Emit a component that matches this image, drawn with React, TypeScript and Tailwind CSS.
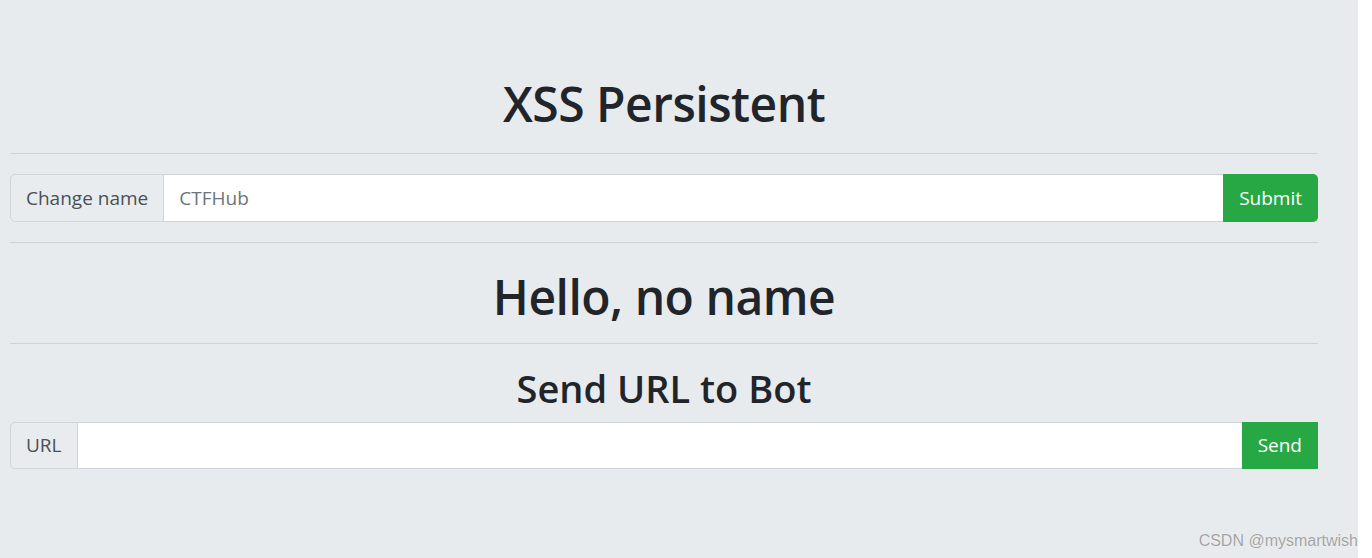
const font = { fontFamily: '"Open Sans", "Noto Sans", sans-serif' }

export default function App() {
  return (
    <div className="relative flex h-[558px] w-[1372px] bg-white" style={font}>
      <div className="h-full w-[1358px] bg-[#e8ebee]">
        <div className="ml-[10px] flex w-[1308px] flex-col text-[#212529]">
          <h1 className="mt-[72px] text-center text-[48px] font-semibold leading-[64px] tracking-[-0.5px]">
            XSS Persistent
          </h1>
          <hr className="mt-[17px] border-t border-black/10" />

          <div className="mt-[20px] flex h-[48px] text-[19px]">
            <span className="flex items-center rounded-l-[5px] border border-[#ced4da] bg-[#e9ecef] px-[15px] text-[#495057]">
              Change name
            </span>
            <input
              className="flex-1 border-y border-[#ced4da] bg-white px-[15px] text-[#495057] outline-none placeholder:text-[#6c757d]"
              placeholder="CTFHub"
            />
            <button className="rounded-r-[5px] bg-[#28a745] px-4 text-white">Submit</button>
          </div>

          <hr className="mt-[20px] border-t border-black/10" />
          <h1 className="mt-[22px] text-center text-[48px] font-semibold leading-[64px] tracking-[-0.5px]">
            Hello, no name
          </h1>
          <hr className="mt-[14px] border-t border-black/10" />
          <h2 className="mt-[22px] text-center text-[38px] font-semibold leading-[44px]">Send URL to Bot</h2>

          <div className="mt-[12px] flex h-[47px] text-[19px]">
            <span className="flex items-center rounded-l-[5px] border border-[#ced4da] bg-[#e9ecef] px-[15px] text-[#495057]">
              URL
            </span>
            <input className="flex-1 border-y border-[#ced4da] bg-white px-4 text-[#495057] outline-none" />
            <button className="bg-[#28a745] px-4 text-white">Send</button>
          </div>
        </div>
      </div>

      <span
        className="absolute right-[14px] top-[529px] text-[16px] text-[#a3a3a3] [text-shadow:0_0_1px_#ffffff]"
        style={{ fontFamily: '"Liberation Sans", Arial, sans-serif' }}
      >
        CSDN @mysmartwish
      </span>
    </div>
  )
}
